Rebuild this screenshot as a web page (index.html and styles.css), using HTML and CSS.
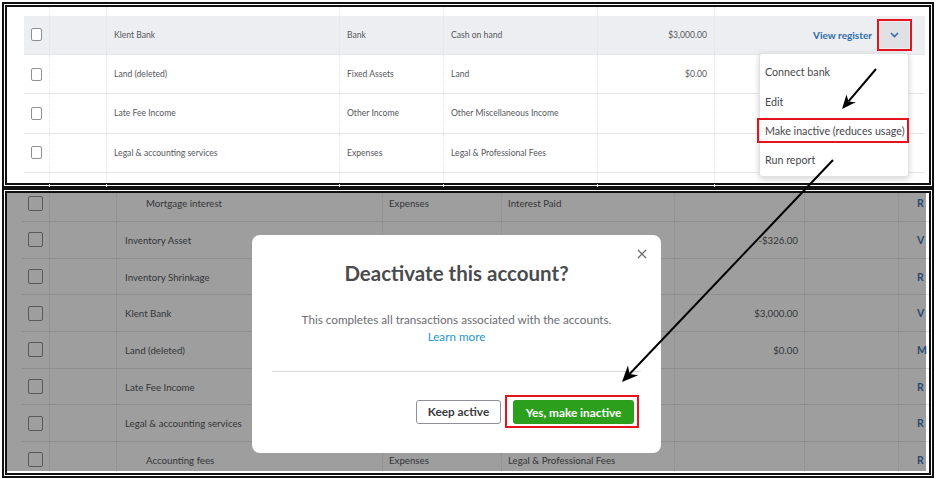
FILE: index.html
```html
<!DOCTYPE html>
<html lang="en">
<head>
  <meta charset="UTF-8" />
  <title>Chart of accounts - make inactive</title>
  <link rel="stylesheet" href="styles.css">
</head>
<body>
  <div class="page">

    <!-- step 1: row menu -->
    <section class="panel top">
      <div class="row spacer">
        <div class="cell"></div><div class="cell"></div><div class="cell"></div><div class="cell"></div><div class="cell"></div><div class="cell"></div><div class="cell"></div>
      </div>
      <div class="row hover">
        <div class="cell chk"><span class="box"></span></div>
        <div class="cell"></div>
        <div class="cell">Klent Bank</div>
        <div class="cell">Bank</div>
        <div class="cell">Cash on hand</div>
        <div class="cell num">$3,000.00</div>
        <div class="cell action">
          <span class="link">View register</span>
          <span class="drop-hl">
            <span class="drop">
              <svg width="9" height="6" viewBox="0 0 9 6"><path d="M1 1l3.5 3.5L8 1" fill="none" stroke="#2f6cab" stroke-width="1.6"/></svg>
            </span>
          </span>
        </div>
      </div>
      <div class="row">
        <div class="cell chk"><span class="box"></span></div>
        <div class="cell"></div>
        <div class="cell">Land (deleted)</div>
        <div class="cell">Fixed Assets</div>
        <div class="cell">Land</div>
        <div class="cell num">$0.00</div>
        <div class="cell"></div>
      </div>
      <div class="row">
        <div class="cell chk"><span class="box"></span></div>
        <div class="cell"></div>
        <div class="cell">Late Fee Income</div>
        <div class="cell">Other Income</div>
        <div class="cell">Other Miscellaneous Income</div>
        <div class="cell num"></div>
        <div class="cell"></div>
      </div>
      <div class="row">
        <div class="cell chk"><span class="box"></span></div>
        <div class="cell"></div>
        <div class="cell">Legal &amp; accounting services</div>
        <div class="cell">Expenses</div>
        <div class="cell">Legal &amp; Professional Fees</div>
        <div class="cell num"></div>
        <div class="cell"></div>
      </div>
      <div class="row">
        <div class="cell"></div><div class="cell"></div><div class="cell"></div><div class="cell"></div><div class="cell"></div><div class="cell"></div><div class="cell"></div>
      </div>

      <div class="menu">
        <div class="item">Connect bank</div>
        <div class="item">Edit</div>
        <div class="item hl">Make inactive (reduces usage)</div>
        <div class="item">Run report</div>
      </div>
    </section>

    <!-- step 2: confirm dialog -->
    <section class="panel bottom">
      <div class="row first">
        <div class="cell chk"><span class="box"></span></div>
        <div class="cell"></div>
        <div class="cell name sub">Mortgage interest</div>
        <div class="cell">Expenses</div>
        <div class="cell">Interest Paid</div>
        <div class="cell num"></div>
        <div class="cell"></div>
        <div class="cell act">R</div>
      </div>
      <div class="row">
        <div class="cell chk"><span class="box"></span></div>
        <div class="cell"></div>
        <div class="cell name">Inventory Asset</div>
        <div class="cell"></div>
        <div class="cell"></div>
        <div class="cell num">-$326.00</div>
        <div class="cell"></div>
        <div class="cell act">V</div>
      </div>
      <div class="row">
        <div class="cell chk"><span class="box"></span></div>
        <div class="cell"></div>
        <div class="cell name">Inventory Shrinkage</div>
        <div class="cell"></div>
        <div class="cell"></div>
        <div class="cell num"></div>
        <div class="cell"></div>
        <div class="cell act">R</div>
      </div>
      <div class="row">
        <div class="cell chk"><span class="box"></span></div>
        <div class="cell"></div>
        <div class="cell name">Klent Bank</div>
        <div class="cell"></div>
        <div class="cell"></div>
        <div class="cell num">$3,000.00</div>
        <div class="cell"></div>
        <div class="cell act">V</div>
      </div>
      <div class="row">
        <div class="cell chk"><span class="box"></span></div>
        <div class="cell"></div>
        <div class="cell name">Land (deleted)</div>
        <div class="cell"></div>
        <div class="cell"></div>
        <div class="cell num">$0.00</div>
        <div class="cell"></div>
        <div class="cell act">M</div>
      </div>
      <div class="row">
        <div class="cell chk"><span class="box"></span></div>
        <div class="cell"></div>
        <div class="cell name">Late Fee Income</div>
        <div class="cell"></div>
        <div class="cell"></div>
        <div class="cell num"></div>
        <div class="cell"></div>
        <div class="cell act">R</div>
      </div>
      <div class="row">
        <div class="cell chk"><span class="box"></span></div>
        <div class="cell"></div>
        <div class="cell name">Legal &amp; accounting services</div>
        <div class="cell"></div>
        <div class="cell"></div>
        <div class="cell num"></div>
        <div class="cell"></div>
        <div class="cell act">R</div>
      </div>
      <div class="row">
        <div class="cell chk"><span class="box"></span></div>
        <div class="cell"></div>
        <div class="cell name sub">Accounting fees</div>
        <div class="cell">Expenses</div>
        <div class="cell">Legal &amp; Professional Fees</div>
        <div class="cell num"></div>
        <div class="cell"></div>
        <div class="cell act">R</div>
      </div>

      <div class="shade"></div>

      <div class="modal">
        <svg class="close" width="10" height="10" viewBox="0 0 10 10"><path d="M1 1l8 8M9 1l-8 8" stroke="#6b6c72" stroke-width="1.3"/></svg>
        <h2>Deactivate this account?</h2>
        <p>This completes all transactions associated with the accounts.</p>
        <a class="learn">Learn more</a>
        <hr>
        <div class="buttons">
          <button class="btn secondary">Keep active</button>
          <span class="btn-hl"><button class="btn primary">Yes, make inactive</button></span>
        </div>
      </div>
    </section>

    <!-- hand drawn arrows -->
    <svg class="marks" width="936" height="479" viewBox="0 0 936 479">
      <line x1="876" y1="69" x2="848.5" y2="101.4" stroke="#000" stroke-width="2"/>
      <polygon points="842,109 855.7,102.2 848.5,101.4 846.5,94.4" fill="#000"/>
      <line x1="833" y1="160" x2="629.6" y2="374" stroke="#000" stroke-width="2"/>
      <polygon points="622,382 638.1,375.2 629.6,374 627.9,365.6" fill="#000"/>
    </svg>
  </div>
</body>
</html>
```

FILE: styles.css
```css
* {
  box-sizing: border-box;
}

body {
  margin: 0;
  background: #fff;
  font-family: Lato, "Open Sans", sans-serif;
  color: #393a3d;
}

.page {
  position: relative;
  width: 936px;
  height: 479px;
  padding: 2px 2px 1px;
}

.panel {
  position: relative;
  overflow: hidden;
  background: #fff;
  border: 5px double #111;
}

.top {
  height: 186px;
  padding: 0 4px 0 17px;
  overflow: visible;
}

.bottom {
  height: 290px;
  padding: 0 0 0 15px;
}

/* table rows */
.row {
  display: grid;
  grid-template-columns: var(--cols);
  border-bottom: 1px solid #e3e5e8;
}

.top .row {
  --cols: 26px 57px 233px 104px 154px 117px 1fr;
  height: 39.3px;
  font-size: 8.6px;
}

.top .row.spacer {
  height: 8.7px;
  border-bottom: 0;
}

.top .row:last-of-type {
  height: 10px;
  border-bottom: 0;
}

.top .hover {
  background: #eceef1;
}

.bottom .row {
  --cols: 28px 67px 266px 119px 173px 130px 94px 1fr;
  height: 36.7px;
  font-size: 9.7px;
}

.bottom .row.first {
  margin-top: -7.7px;
}

.cell {
  display: flex;
  align-items: center;
  padding: 0 7px;
  white-space: nowrap;
  overflow: hidden;
  color: #55575c;
  border-right: 1px dotted #e1e3e6;
}

.cell:last-child {
  border-right: 0;
}

.cell.num {
  justify-content: flex-end;
}

.bottom .cell {
  padding: 0 6px;
}

.bottom .cell.name {
  padding-left: 8px;
}

.bottom .cell.sub {
  padding-left: 29px;
}

.bottom .cell.act {
  padding: 0 0 0 18px;
  font-weight: 700;
  font-size: 10.5px;
  color: #3f78b8;
}

.chk {
  padding-left: 7px;
}

.box {
  width: 13px;
  height: 13px;
  border: 1px solid #8d9096;
  border-radius: 2px;
  background: #fff;
}

.bottom .box {
  width: 15px;
  height: 15px;
}

.bottom .chk {
  padding-left: 6px;
}

/* row actions */
.action {
  justify-content: flex-end;
  padding-right: 13px;
}

.link {
  font-size: 10px;
  font-weight: 700;
  color: #2f6cab;
  margin-right: 5px;
}

.drop-hl {
  display: block;
  padding: 1px;
  border: 2px solid #e5141c;
}

.drop {
  display: flex;
  align-items: center;
  justify-content: center;
  width: 29px;
  height: 26px;
  background: #dfe1e4;
}

.menu {
  position: absolute;
  left: 752px;
  top: 46px;
  width: 150px;
  padding: 2px 0;
  background: #fff;
  border: 1px solid #dfe1e4;
  border-radius: 3px;
  box-shadow: 0 2px 6px rgba(0, 0, 0, 0.18);
  font-size: 10.7px;
  z-index: 2;
}

.menu .item {
  display: flex;
  align-items: center;
  height: 30px;
  padding-left: 5px;
  color: #47484c;
}

.menu .hl {
  height: 25px;
  margin: 2px -1px 1px -3px;
  padding-left: 6px;
  border: 2px solid #e5141c;
}

/* dialog */
.shade {
  position: absolute;
  top: 0;
  left: 0;
  right: 3px;
  bottom: 2px;
  background: rgba(0, 0, 0, 0.38);
}

.modal {
  position: absolute;
  left: 245px;
  top: 42px;
  width: 409px;
  height: 218px;
  padding: 0 20px;
  background: #fff;
  border-radius: 8px;
  text-align: center;
}

.close {
  position: absolute;
  right: 14px;
  top: 14px;
}

.modal h2 {
  margin: 26px 0 0;
  font-size: 20.5px;
  line-height: 24px;
  font-weight: 700;
  color: #4a4b4e;
}

.modal p {
  margin: 26px 0 0;
  font-size: 11.7px;
  line-height: 17px;
  color: #6b6c72;
  white-space: nowrap;
}

.learn {
  display: block;
  font-size: 11.7px;
  line-height: 17px;
  color: #2895cf;
}

.modal hr {
  margin: 26px 0 0;
  border: 0;
  border-top: 1px solid #d4d7dc;
}

.buttons {
  display: flex;
  justify-content: flex-end;
  align-items: center;
  margin: 23px 2px 0 0;
}

.btn {
  height: 24px;
  padding: 0;
  border-radius: 3px;
  font-family: inherit;
  font-size: 11.8px;
  font-weight: 700;
}

.secondary {
  width: 85px;
  background: #fff;
  border: 1px solid #8d9096;
  color: #393a3d;
}

.btn-hl {
  display: block;
  margin-left: 4px;
  padding: 3px 3px 2px 6px;
  border: 2px solid #e5141c;
}

.primary {
  width: 121px;
  background: #2ca01c;
  border: 0;
  color: #fff;
}

.marks {
  position: absolute;
  left: 0;
  top: 0;
  z-index: 5;
  pointer-events: none;
}
```
